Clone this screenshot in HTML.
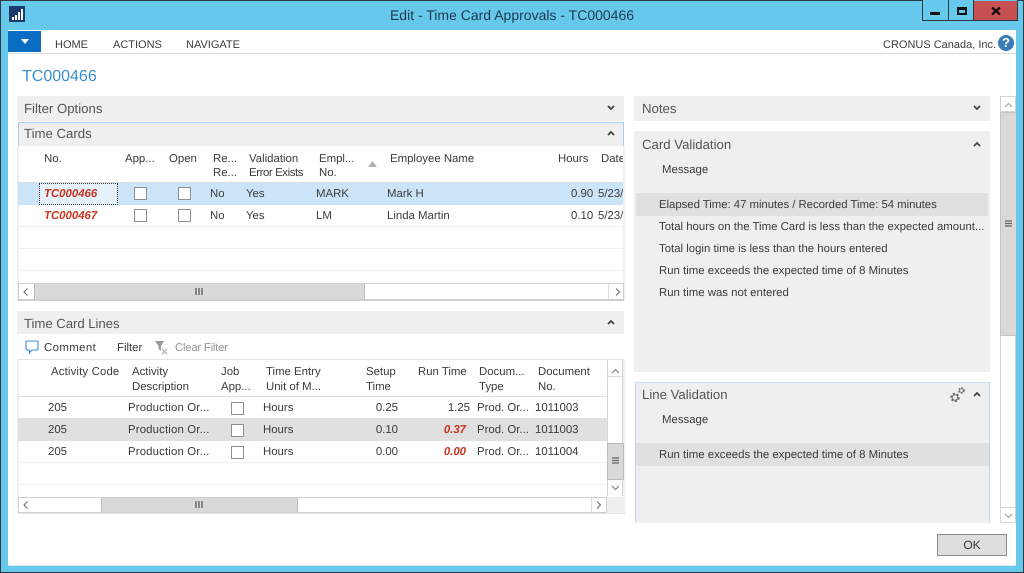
<!DOCTYPE html>
<html><head><meta charset="utf-8"><style>
html,body{margin:0;padding:0;width:1024px;height:573px;overflow:hidden;background:#66c8ea}
*{box-sizing:border-box}
#r{position:relative;width:1024px;height:573px;overflow:hidden;font-family:"Liberation Sans",sans-serif;font-size:11.4px;color:#3c3c3c;text-rendering:geometricPrecision}
#r div{position:absolute}
.t{white-space:nowrap;line-height:14px;height:14px;transform:translateY(-6px)}
.h{font-size:13.2px;color:#555}
.cap{font-size:11px}
.g{background:#efefef}
.l{height:1px;background:#efefef}
.c{width:13px;height:13px;background:#fff;border:1px solid #8f8f8f}
.e{color:#c8321e;font-weight:bold;font-style:italic}
.rt{text-align:right}
.pr{letter-spacing:.15px}
svg{position:absolute;overflow:visible}
</style></head><body><div id="r">
<div style="left:0;top:0;width:1024px;height:1px;background:#2c3a45"></div>
<div style="left:0;top:0;width:1px;height:573px;background:#2c3a45"></div>
<div style="left:1023px;top:0;width:1px;height:573px;background:#2c3a45"></div>
<div style="left:0;top:572px;width:1024px;height:1px;background:#2c3a45"></div>

<div style="left:9px;top:6px;width:16px;height:16px;background:#1b3a6e"></div>
<svg style="left:9px;top:6px" width="16" height="16"><path d="M3 11h2v3H3zM6 9h2v5H6zM9 6h2v8H9zM12 3h2v11h-2z" fill="#fff"/></svg>
<div class="t" style="left:0;width:1024px;top:14px;text-align:center;font-size:14px;color:#1f3b52">Edit - Time Card Approvals - TC000466</div>

<div style="left:922px;top:0;width:96px;height:21px;border:1px solid #2c3a45;border-top:0;background:#66c8ea"></div>
<div style="left:948px;top:0;width:1px;height:21px;background:#2c3a45"></div>
<div style="left:973px;top:0;width:1px;height:21px;background:#2c3a45"></div>
<div style="left:974px;top:1px;width:43px;height:19px;background:#c75050"></div>
<div style="left:930px;top:12px;width:10px;height:3px;background:#111"></div>
<div style="left:957px;top:7px;width:10px;height:8px;border:2px solid #111;border-top-width:3px"></div>
<svg style="left:991px;top:7px" width="10" height="8"><path d="M1 0.500l8 7M9 0.500l-8 7" stroke="#111" stroke-width="2.200" fill="none"/></svg>

<div style="left:8px;top:30px;width:1008px;height:535px;background:#fff"></div>
<div style="left:8px;top:31px;width:33px;height:21px;background:#0b6cc4"></div>
<svg style="left:21px;top:39px" width="8" height="5"><path d="M0 0h8L4 5z" fill="#fff"/></svg>
<div class="t cap" style="left:55px;top:44px">HOME</div>
<div class="t cap" style="left:113px;top:44px">ACTIONS</div>
<div class="t cap" style="left:186px;top:44px">NAVIGATE</div>
<div class="t cap" style="left:883px;top:44px">CRONUS Canada, Inc.</div>
<div style="left:998px;top:35px;width:16px;height:16px;border-radius:8px;background:#3a7ab8;color:#fff;font-weight:bold;font-size:13px;line-height:16px;text-align:center">?</div>
<div style="left:8px;top:53px;width:1008px;height:1px;background:#ddd"></div>

<div class="t" style="left:22px;top:76px;font-size:16px;color:#3a8fd0">TC000466</div>

<div class="g" style="left:17px;top:96px;width:607px;height:25px"></div>
<div class="t h" style="left:24px;top:108px">Filter Options</div>
<svg style="left:607px;top:105px" width="8" height="6"><path d="M1 1l3 3 3-3" stroke="#444" stroke-width="1.800" fill="none"/></svg>

<div class="g" style="left:18px;top:122px;width:606px;height:24px;border-top:1px solid #a6cdf4"></div>
<div style="left:18px;top:122px;width:1px;height:24px;background:#a6cdf4"></div>
<div style="left:623px;top:122px;width:1px;height:24px;background:#a6cdf4"></div>
<div class="t h" style="left:24px;top:133px">Time Cards</div>
<svg style="left:607px;top:130px" width="8" height="6"><path d="M1 5l3-3 3 3" stroke="#444" stroke-width="1.800" fill="none"/></svg>

<div style="left:17px;top:146px;width:2px;height:155px;background:#efefef"></div>
<div style="left:623px;top:146px;width:2px;height:155px;background:#efefef"></div>
<div class="t" style="left:44px;top:158px">No.</div>
<div class="t" style="left:125px;top:158px">App...</div>
<div class="t" style="left:169px;top:158px">Open</div>
<div class="t" style="left:213px;top:158px">Re...</div>
<div class="t" style="left:213px;top:172px">Re...</div>
<div class="t" style="left:249px;top:158px">Validation</div>
<div class="t" style="left:249px;top:172px;letter-spacing:-.4px">Error Exists</div>
<div class="t" style="left:319px;top:158px">Empl...</div>
<div class="t" style="left:319px;top:172px">No.</div>
<svg style="left:368px;top:161px" width="10" height="6"><path d="M0 6h9L4.500 0z" fill="#b0b0b0"/></svg>
<div class="t" style="left:390px;top:158px">Employee Name</div>
<div class="t" style="left:558px;top:158px">Hours</div>
<div class="t" style="left:601px;top:158px;width:22px;overflow:hidden">Date</div>
<div style="left:18px;top:182px;width:606px;height:1px;background:#ddd"></div>

<div style="left:18px;top:183px;width:605px;height:22px;background:#cbe4f7"></div>
<div style="left:39px;top:183px;width:79px;height:22px;border:1px dotted #333;background:#e6f2fb"></div>
<div class="t e" style="left:44px;top:193px">TC000466</div>
<div class="c" style="left:134px;top:187px"></div>
<div class="c" style="left:178px;top:187px"></div>
<div class="t" style="left:210px;top:193px">No</div>
<div class="t" style="left:246px;top:193px">Yes</div>
<div class="t" style="left:316px;top:193px">MARK</div>
<div class="t" style="left:387px;top:193px">Mark H</div>
<div class="t" style="left:571px;top:193px">0.90</div>
<div class="t" style="left:598px;top:193px;width:25px;overflow:hidden">5/23/</div>

<div class="t e" style="left:44px;top:215px">TC000467</div>
<div class="c" style="left:134px;top:209px"></div>
<div class="c" style="left:178px;top:209px"></div>
<div class="t" style="left:210px;top:215px">No</div>
<div class="t" style="left:246px;top:215px">Yes</div>
<div class="t" style="left:316px;top:215px">LM</div>
<div class="t" style="left:387px;top:215px">Linda Martin</div>
<div class="t" style="left:571px;top:215px">0.10</div>
<div class="t" style="left:598px;top:215px;width:25px;overflow:hidden">5/23/</div>
<div class="l" style="left:18px;top:226px;width:605px"></div>
<div class="l" style="left:18px;top:248px;width:605px"></div>
<div class="l" style="left:18px;top:270px;width:605px"></div>

<div style="left:18px;top:283px;width:606px;height:18px;background:#fff;border:1px solid #cfcfcf;border-bottom:2px solid #cfcfcf"></div>
<div style="left:34px;top:284px;width:331px;height:15px;background:#d9d9d9;border:1px solid #bbb;border-width:0 1px"></div>
<svg style="left:23px;top:288px" width="6" height="8"><path d="M4.500 0.500L1 4l3.500 3.500" stroke="#666" fill="none"/></svg>
<svg style="left:615px;top:288px" width="6" height="8"><path d="M1 0.500L4.500 4 1 7.500" stroke="#666" fill="none"/></svg>
<div style="left:608px;top:284px;width:1px;height:15px;background:#ddd"></div>
<svg style="left:195px;top:288px" width="9" height="7"><path d="M1 0v7M4 0v7M7 0v7" stroke="#666" stroke-width="1.400"/></svg>

<div class="g" style="left:17px;top:311px;width:607px;height:23px"></div>
<div class="t h" style="left:24px;top:323px;letter-spacing:-.05px">Time Card Lines</div>
<svg style="left:607px;top:319px" width="8" height="6"><path d="M1 5l3-3 3 3" stroke="#444" stroke-width="1.800" fill="none"/></svg>
<svg style="left:25px;top:340px" width="14" height="14"><path d="M2 1h10a1 1 0 0 1 1 1v7a1 1 0 0 1-1 1H7l-2.500 3V10H2a1 1 0 0 1-1-1V2a1 1 0 0 1 1-1z" fill="#fff" stroke="#3a8fd0" stroke-width="1.100"/></svg>
<div class="t" style="left:44px;top:347px;letter-spacing:.4px">Comment</div>
<div class="t" style="left:117px;top:347px">Filter</div>
<svg style="left:155px;top:340px" width="15" height="15"><path d="M0 1h9L6 6v5L3.500 9V6z" fill="#999"/><path d="M7 9l5 5M12 9l-5 5" stroke="#b5b5b5" stroke-width="1.300"/></svg>
<div class="t" style="left:175px;top:347px;color:#999;letter-spacing:-.25px">Clear Filter</div>

<div style="left:17px;top:359px;width:608px;height:1px;background:#e3e3e3"></div>
<div style="left:17px;top:359px;width:2px;height:155px;background:#efefef"></div>
<div style="left:623px;top:359px;width:2px;height:155px;background:#efefef"></div>
<div class="t pr" style="left:51px;top:371px">Activity Code</div>
<div class="t" style="left:132px;top:371px">Activity</div>
<div class="t" style="left:132px;top:386px">Description</div>
<div class="t" style="left:221px;top:371px">Job</div>
<div class="t" style="left:221px;top:386px">App...</div>
<div class="t" style="left:266px;top:371px">Time Entry</div>
<div class="t" style="left:266px;top:386px">Unit of M...</div>
<div class="t" style="left:366px;top:371px">Setup</div>
<div class="t" style="left:366px;top:386px">Time</div>
<div class="t" style="left:418px;top:371px">Run Time</div>
<div class="t" style="left:479px;top:371px">Docum...</div>
<div class="t" style="left:479px;top:386px">Type</div>
<div class="t" style="left:538px;top:371px">Document</div>
<div class="t" style="left:538px;top:386px">No.</div>
<div style="left:18px;top:396px;width:589px;height:1px;background:#ddd"></div>

<div style="left:18px;top:418px;width:589px;height:23px;background:#e0e0e0"></div>
<div class="t" style="left:48px;top:407px">205</div>
<div class="t pr" style="left:128px;top:407px">Production Or...</div>
<div class="c" style="left:231px;top:402px"></div>
<div class="t" style="left:263px;top:407px">Hours</div>
<div class="t rt" style="left:358px;width:40px;top:407px">0.25</div>
<div class="t rt" style="left:430px;width:40px;top:407px">1.25</div>
<div class="t" style="left:477px;top:407px">Prod. Or...</div>
<div class="t" style="left:535px;top:407px">1011003</div>

<div class="t" style="left:48px;top:429px">205</div>
<div class="t pr" style="left:128px;top:429px">Production Or...</div>
<div class="c" style="left:231px;top:424px"></div>
<div class="t" style="left:263px;top:429px">Hours</div>
<div class="t rt" style="left:358px;width:40px;top:429px">0.10</div>
<div class="t rt e" style="left:426px;width:40px;top:429px">0.37</div>
<div class="t" style="left:477px;top:429px">Prod. Or...</div>
<div class="t" style="left:535px;top:429px">1011003</div>

<div class="t" style="left:48px;top:451px">205</div>
<div class="t pr" style="left:128px;top:451px">Production Or...</div>
<div class="c" style="left:231px;top:446px"></div>
<div class="t" style="left:263px;top:451px">Hours</div>
<div class="t rt" style="left:358px;width:40px;top:451px">0.00</div>
<div class="t rt e" style="left:426px;width:40px;top:451px">0.00</div>
<div class="t" style="left:477px;top:451px">Prod. Or...</div>
<div class="t" style="left:535px;top:451px">1011004</div>
<div class="l" style="left:18px;top:462px;width:589px"></div>
<div class="l" style="left:18px;top:484px;width:589px"></div>

<div style="left:607px;top:360px;width:16px;height:136px;background:#fff;border:1px solid #d5d5d5;border-width:0 1px"></div>
<div style="left:607px;top:443px;width:17px;height:37px;background:#d9d9d9;border:1px solid #bbb"></div>
<svg style="left:611px;top:457px" width="9" height="8"><path d="M1 1h7M1 3.500h7M1 6h7" stroke="#666" stroke-width="1.200"/></svg>
<svg style="left:611px;top:485px" width="9" height="6"><path d="M1 1l3.500 3.500L8 1" stroke="#777" fill="none"/></svg>
<svg style="left:611px;top:368px" width="9" height="6"><path d="M1 5l3.500-3.500L8 5" stroke="#777" fill="none"/></svg>
<div style="left:607px;top:376px;width:17px;height:1px;background:#ddd"></div>

<div style="left:18px;top:497px;width:589px;height:16px;background:#fff;border:1px solid #cfcfcf;border-left-color:#ddd"></div>
<div style="left:607px;top:497px;width:17px;height:16px;background:#efefef"></div>
<div style="left:101px;top:498px;width:197px;height:14px;background:#d9d9d9;border:1px solid #bbb;border-width:0 1px"></div>
<svg style="left:23px;top:501px" width="6" height="8"><path d="M4.500 0.500L1 4l3.500 3.500" stroke="#666" fill="none"/></svg>
<svg style="left:596px;top:501px" width="6" height="8"><path d="M1 0.500L4.500 4 1 7.500" stroke="#666" fill="none"/></svg>
<div style="left:591px;top:498px;width:1px;height:14px;background:#ddd"></div>
<svg style="left:195px;top:501px" width="9" height="7"><path d="M1 0v7M4 0v7M7 0v7" stroke="#666" stroke-width="1.400"/></svg>
<div style="left:17px;top:513px;width:608px;height:1px;background:#e8e8e8"></div>

<div class="g" style="left:634px;top:96px;width:356px;height:25px"></div>
<div class="t h" style="left:642px;top:108px">Notes</div>
<svg style="left:973px;top:105px" width="8" height="6"><path d="M1 1l3 3 3-3" stroke="#444" stroke-width="1.800" fill="none"/></svg>

<div class="g" style="left:634px;top:131px;width:356px;height:241px"></div>
<div class="t h" style="left:642px;top:144px">Card Validation</div>
<svg style="left:973px;top:141px" width="8" height="6"><path d="M1 5l3-3 3 3" stroke="#444" stroke-width="1.800" fill="none"/></svg>
<div class="t" style="left:662px;top:169px">Message</div>
<div style="left:636px;top:193px;width:352px;height:23px;background:#e0e0e0"></div>
<div class="t" style="left:659px;top:204px;letter-spacing:-.04px">Elapsed Time: 47 minutes / Recorded Time: 54 minutes</div>
<div class="t" style="left:659px;top:226px">Total hours on the Time Card is less than the expected amount...</div>
<div class="t" style="left:659px;top:248px">Total login time is less than the hours entered</div>
<div class="t" style="left:659px;top:270px">Run time exceeds the expected time of 8 Minutes</div>
<div class="t" style="left:659px;top:292px">Run time was not entered</div>

<div class="g" style="left:635px;top:382px;width:355px;height:141px;border:1px solid #c4dcf3;border-bottom:0"></div>
<div class="t h" style="left:642px;top:394px">Line Validation</div>
<svg style="left:949px;top:387px" width="16" height="16"><g fill="none" stroke="#6f6f6f"><circle cx="6" cy="10.500" r="3.500" stroke-width="2.400" stroke-dasharray="2 1.600"/><circle cx="6" cy="10.500" r="2.800" stroke-width="1"/><circle cx="12.500" cy="3.500" r="2.400" stroke-width="1.800" stroke-dasharray="1.500 1.200"/><circle cx="12.500" cy="3.500" r="1.900" stroke-width=".8"/></g></svg>
<svg style="left:973px;top:391px" width="8" height="6"><path d="M1 5l3-3 3 3" stroke="#444" stroke-width="1.800" fill="none"/></svg>
<div class="t" style="left:662px;top:419px">Message</div>
<div style="left:636px;top:443px;width:353px;height:23px;background:#e0e0e0"></div>
<div class="t" style="left:659px;top:454px">Run time exceeds the expected time of 8 Minutes</div>

<div style="left:1000px;top:96px;width:16px;height:427px;background:#fff;border:1px solid #d5d5d5;border-width:0 1px"></div>
<div style="left:1000px;top:96px;width:16px;height:16px;background:#fff;border:1px solid #d5d5d5"></div>
<div style="left:1000px;top:112px;width:16px;height:224px;background:#d9d9d9;border:1px solid #c4c4c4;border-width:1px 0 1px 1px"></div>
<svg style="left:1004px;top:102px" width="9" height="6"><path d="M1 5l3.500-3.500L8 5" stroke="#999" fill="none"/></svg>
<svg style="left:1004px;top:220px" width="9" height="8"><path d="M1 1h7M1 3.500h7M1 6h7" stroke="#666" stroke-width="1.200"/></svg>
<div style="left:1000px;top:507px;width:16px;height:16px;background:#fff;border:1px solid #d5d5d5"></div>
<svg style="left:1004px;top:513px" width="9" height="6"><path d="M1 1l3.500 3.500L8 1" stroke="#999" fill="none"/></svg>

<div style="left:937px;top:534px;width:70px;height:22px;background:#dedede;border:1px solid #8a8a8a;text-align:center;line-height:21px;color:#333;font-size:12px">OK</div>
<div style="left:8px;top:565px;width:1008px;height:1px;background:#d8e8ee"></div>
</div></body></html>
